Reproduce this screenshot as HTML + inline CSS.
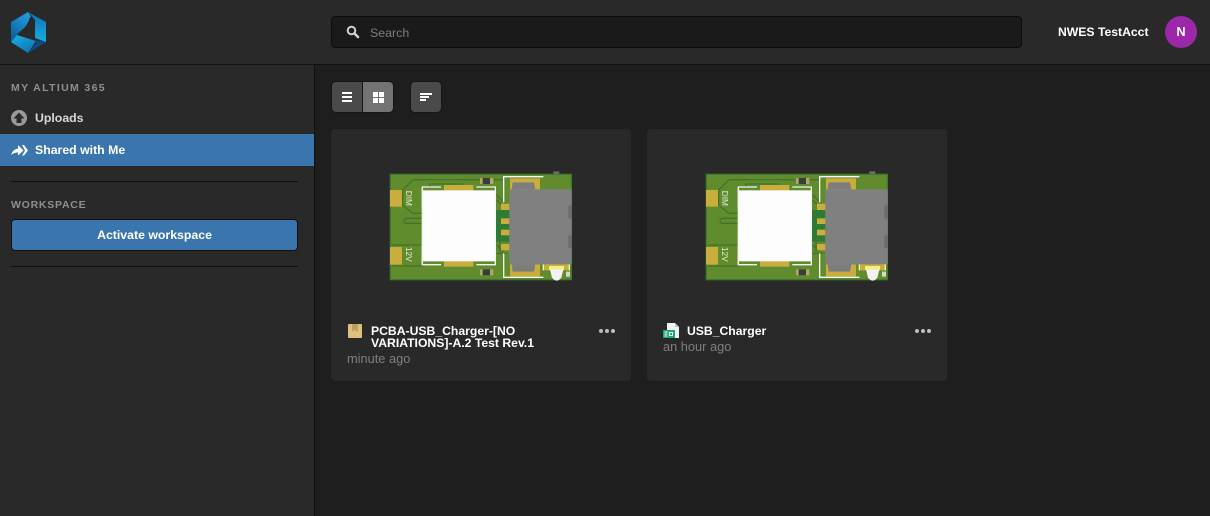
<!DOCTYPE html>
<html><head><meta charset="utf-8"><style>
*{box-sizing:border-box}
html,body{margin:0;padding:0;width:1210px;height:516px;overflow:hidden;background:#1e1e1e;font-family:"Liberation Sans",sans-serif}
.a{position:absolute;white-space:nowrap}
.hdr{left:0;top:0;width:1210px;height:65px;background:#292929;border-bottom:1px solid #111}
.side{left:0;top:65px;width:315px;height:451px;background:#292929;border-right:1px solid #111}
.cap{font-size:10.5px;font-weight:bold;color:#8f8f8f}
.nav{font-size:12.3px;font-weight:bold;line-height:16px}
.card{background:#292929;border-radius:4px;width:300px;height:252px;top:129px}
.t{font-size:12.2px;font-weight:bold;color:#fff;line-height:12px}
.s{font-size:12.8px;color:#7f7f7f;line-height:16px}
.btn{background:#4a4a4a;border:1px solid #151515;height:32px;top:81px}
</style></head><body>
<div class="a hdr"></div><div class="a side"></div>

<svg class="a" style="left:5px;top:7px" width="48" height="50" viewBox="0 0 48 50">
<defs>
<linearGradient id="g1" x1="0.7" y1="0" x2="0.2" y2="1"><stop offset="0" stop-color="#1f9ee0"/><stop offset="1" stop-color="#0c5a9a"/></linearGradient>
<linearGradient id="g2" x1="0" y1="0" x2="0" y2="1"><stop offset="0" stop-color="#0f6fb5"/><stop offset="1" stop-color="#18aee0"/></linearGradient>
<linearGradient id="g3" x1="0" y1="0" x2="1" y2="1"><stop offset="0" stop-color="#18b4e4"/><stop offset="1" stop-color="#0d6cae"/></linearGradient>
</defs>
<path d="M23 5L6 15V35L12 28L21 19L26 10Z" fill="url(#g1)"/>
<path d="M23 5L41 15V35L30 31V13Z" fill="url(#g2)"/>
<path d="M6 35L12 28L31 34L23 46Z" fill="url(#g3)"/>
<path d="M30 32L41 35L23 46L31 36Z" fill="#0b4c86"/>
<path d="M25 10L30 13V32L38 34.500L30 33.500L12 27L22 19Z" fill="#292929"/>
</svg>

<div class="a" style="left:331px;top:16px;width:691px;height:32px;background:#1a1a1a;border:1px solid #0c0c0c;border-radius:4px"></div>
<svg class="a" style="left:346px;top:25px" width="14" height="14" viewBox="0 0 14 14"><circle cx="5.500" cy="5.500" r="3.800" fill="none" stroke="#d0d0d0" stroke-width="2"/><path d="M8.500 8.500l3.500 3.500" stroke="#d0d0d0" stroke-width="2.600" stroke-linecap="round"/></svg>
<div class="a" style="left:370px;top:25px;font-size:12.4px;line-height:16px;color:#7d7d7d">Search</div>

<div class="a" style="left:1058px;top:24px;font-size:12.2px;font-weight:bold;line-height:16px;color:#fff">NWES TestAcct</div>
<div class="a" style="left:1165px;top:16px;width:32px;height:32px;border-radius:50%;background:#9c27a8;color:#fff;font-size:12.5px;font-weight:bold;line-height:32px;text-align:center">N</div>

<div class="a cap" style="left:11px;top:81px;line-height:14px;letter-spacing:1.35px">MY ALTIUM 365</div>
<svg class="a" style="left:11px;top:110px" width="16" height="16" viewBox="0 0 16 16"><circle cx="8" cy="8" r="8" fill="#9a9a9a"/><path d="M8 2.500L13.500 8.500H10.500V13H5.500V8.500H2.500Z" fill="#292929"/></svg>
<div class="a nav" style="left:35px;top:110px;color:#d8d8d8">Uploads</div>
<div class="a" style="left:0;top:134px;width:314px;height:32px;background:#3b75ae"></div>
<svg class="a" style="left:11px;top:143px" width="17" height="14" viewBox="0 0 17 14"><path d="M0 12Q2 6 7 5.500V2L12.500 7.500L7 12.500V9.500Q3 9.500 0 12Z" fill="#fff"/><path d="M11 2H13L17 7.500L13 12.500H11L14 7.500Z" fill="#fff"/></svg>
<div class="a nav" style="left:35px;top:142px;color:#fff">Shared with Me</div>

<div class="a" style="left:11px;top:181px;width:287px;height:1px;background:#0f0f0f"></div>
<div class="a cap" style="left:11px;top:198px;line-height:14px;letter-spacing:.75px">WORKSPACE</div>
<div class="a" style="left:11px;top:219px;width:287px;height:32px;background:#3b75ae;border:1px solid #111;border-radius:4px;color:#fff;font-size:12.3px;font-weight:bold;line-height:30px;text-align:center">Activate workspace</div>
<div class="a" style="left:11px;top:266px;width:287px;height:1px;background:#0f0f0f"></div>

<div class="a btn" style="left:331px;width:32px;border-radius:5px 0 0 5px"></div>
<div class="a btn" style="left:362px;width:32px;background:#737373;border-radius:0 5px 5px 0"></div>
<div class="a" style="left:342px;top:92px;width:10px;height:2px;background:#fff;box-shadow:0 4px #fff,0 8px #fff"></div>
<div class="a" style="left:373px;top:92px;width:5px;height:5px;background:#fff;box-shadow:6px 0 #fff,0 6px #fff,6px 6px #fff"></div>
<div class="a btn" style="left:410px;width:32px;border-radius:5px"></div>
<div class="a" style="left:420px;top:93px;width:12px;height:2px;background:#fff"></div>
<div class="a" style="left:420px;top:96px;width:9px;height:2px;background:#fff"></div>
<div class="a" style="left:420px;top:99px;width:6px;height:2px;background:#fff"></div>

<div class="a card" style="left:331px"></div>
<div class="a card" style="left:647px"></div>

<svg class="a" style="left:380px;top:165px" width="200" height="125" viewBox="0 0 600 375">
<rect x="30" y="27" width="545" height="318" fill="#618c2e"/>
<rect x="31" y="28" width="543" height="316" fill="none" stroke="#41782c" stroke-width="4"/>
<path d="M100 44H370M68 75l32-31M68 75v45l30 25h30M125 160H80a7 7 0 0 0 0 15H125M35 240h90M35 303h95M150 66v-9h100M350 240l20 20M350 265h30M350 105l35 35M350 90l35 35M360 170v90" fill="none" stroke="#3f752b" stroke-width="4"/>
<rect x="30" y="75" width="36" height="50" fill="#c9ae3d"/><rect x="30" y="246" width="36" height="53" fill="#c9ae3d"/>
<rect x="192" y="60" width="88" height="18" fill="#c9ae3d"/><rect x="192" y="287" width="88" height="18" fill="#c9ae3d"/>
<rect x="348" y="135" width="40" height="95" fill="#2f7a35"/>
<rect x="363" y="116" width="25" height="19" fill="#c9ae3d"/><rect x="363" y="160" width="25" height="17" fill="#c9ae3d"/><rect x="363" y="194" width="25" height="17" fill="#c9ae3d"/><rect x="363" y="237" width="25" height="19" fill="#c9ae3d"/>
<rect x="390" y="40" width="90" height="35" fill="#c9ae3d"/><rect x="390" y="298" width="90" height="36" fill="#c9ae3d"/>
<path d="M395 73L398 52H462L466 73Z" fill="#7d7d7d"/><path d="M395 298L398 320H462L466 298Z" fill="#7d7d7d"/>
<rect x="388" y="73" width="187" height="225" fill="#808080"/>
<rect x="565" y="122" width="10" height="38" fill="#6c6c6c"/><rect x="565" y="211" width="10" height="38" fill="#6c6c6c"/>
<rect x="129" y="76" width="216" height="213" fill="#fdfdfd"/>
<path d="M127 125V66H183M289 66H346V299H289M183 299H127V240" fill="none" stroke="#f4f4f4" stroke-width="4"/>
<path d="M127 68V299" stroke="#f4f4f4" stroke-width="4"/>
<path d="M490 35H371V112M371 265V337H490" fill="none" stroke="#f7f7f7" stroke-width="4"/>
<rect x="300" y="39" width="40" height="18" fill="#b5a566"/><rect x="308" y="39" width="22" height="18" fill="#35403a"/>
<rect x="300" y="313" width="40" height="18" fill="#b5a566"/><rect x="308" y="313" width="22" height="18" fill="#35403a"/>
<rect x="490" y="298" width="78" height="18" fill="#c9ae3d"/>
<path d="M490 316V298M568 316V298" stroke="#f3efc0" stroke-width="4"/>
<rect x="507" y="303" width="45" height="12" fill="#f5ee8a"/>
<path d="M510 314H550L544 338Q530 356 516 338Z" fill="#f2f2f2"/>
<rect x="558" y="320" width="12" height="15" fill="#eee" opacity=".8"/>
<text x="84" y="268" font-family="Liberation Sans" font-size="25" fill="#e4ebd0" transform="rotate(90 84 268)" text-anchor="middle" dominant-baseline="middle">12V</text>
<text x="84" y="100" font-family="Liberation Sans" font-size="25" fill="#e4ebd0" transform="rotate(90 84 100)" text-anchor="middle" dominant-baseline="middle">DIM</text>
<rect x="520" y="19" width="18" height="8" fill="#888" opacity=".7"/>
</svg>

<svg class="a" style="left:696px;top:165px" width="200" height="125" viewBox="0 0 600 375">
<rect x="30" y="27" width="545" height="318" fill="#618c2e"/>
<rect x="31" y="28" width="543" height="316" fill="none" stroke="#41782c" stroke-width="4"/>
<path d="M100 44H370M68 75l32-31M68 75v45l30 25h30M125 160H80a7 7 0 0 0 0 15H125M35 240h90M35 303h95M150 66v-9h100M350 240l20 20M350 265h30M350 105l35 35M350 90l35 35M360 170v90" fill="none" stroke="#3f752b" stroke-width="4"/>
<rect x="30" y="75" width="36" height="50" fill="#c9ae3d"/><rect x="30" y="246" width="36" height="53" fill="#c9ae3d"/>
<rect x="192" y="60" width="88" height="18" fill="#c9ae3d"/><rect x="192" y="287" width="88" height="18" fill="#c9ae3d"/>
<rect x="348" y="135" width="40" height="95" fill="#2f7a35"/>
<rect x="363" y="116" width="25" height="19" fill="#c9ae3d"/><rect x="363" y="160" width="25" height="17" fill="#c9ae3d"/><rect x="363" y="194" width="25" height="17" fill="#c9ae3d"/><rect x="363" y="237" width="25" height="19" fill="#c9ae3d"/>
<rect x="390" y="40" width="90" height="35" fill="#c9ae3d"/><rect x="390" y="298" width="90" height="36" fill="#c9ae3d"/>
<path d="M395 73L398 52H462L466 73Z" fill="#7d7d7d"/><path d="M395 298L398 320H462L466 298Z" fill="#7d7d7d"/>
<rect x="388" y="73" width="187" height="225" fill="#808080"/>
<rect x="565" y="122" width="10" height="38" fill="#6c6c6c"/><rect x="565" y="211" width="10" height="38" fill="#6c6c6c"/>
<rect x="129" y="76" width="216" height="213" fill="#fdfdfd"/>
<path d="M127 125V66H183M289 66H346V299H289M183 299H127V240" fill="none" stroke="#f4f4f4" stroke-width="4"/>
<path d="M127 68V299" stroke="#f4f4f4" stroke-width="4"/>
<path d="M490 35H371V112M371 265V337H490" fill="none" stroke="#f7f7f7" stroke-width="4"/>
<rect x="300" y="39" width="40" height="18" fill="#b5a566"/><rect x="308" y="39" width="22" height="18" fill="#35403a"/>
<rect x="300" y="313" width="40" height="18" fill="#b5a566"/><rect x="308" y="313" width="22" height="18" fill="#35403a"/>
<rect x="490" y="298" width="78" height="18" fill="#c9ae3d"/>
<path d="M490 316V298M568 316V298" stroke="#f3efc0" stroke-width="4"/>
<rect x="507" y="303" width="45" height="12" fill="#f5ee8a"/>
<path d="M510 314H550L544 338Q530 356 516 338Z" fill="#f2f2f2"/>
<rect x="558" y="320" width="12" height="15" fill="#eee" opacity=".8"/>
<text x="84" y="268" font-family="Liberation Sans" font-size="25" fill="#e4ebd0" transform="rotate(90 84 268)" text-anchor="middle" dominant-baseline="middle">12V</text>
<text x="84" y="100" font-family="Liberation Sans" font-size="25" fill="#e4ebd0" transform="rotate(90 84 100)" text-anchor="middle" dominant-baseline="middle">DIM</text>
<rect x="520" y="19" width="18" height="8" fill="#888" opacity=".7"/>
</svg>

<svg class="a" style="left:348px;top:324px" width="14" height="14" viewBox="0 0 14 14"><rect width="14" height="14" rx="1" fill="#dfc07f"/><path d="M4 0H10V8L7 6 4 8Z" fill="#bda063"/></svg>
<div class="a t" style="left:371px;top:325px">PCBA-USB_Charger-[NO<br>VARIATIONS]-A.2 Test Rev.1</div>
<div class="a s" style="left:347px;top:351px">minute ago</div>
<div class="a" style="left:599px;top:329px;width:4px;height:4px;border-radius:50%;background:#bdbdbd;box-shadow:6px 0 #bdbdbd,12px 0 #bdbdbd"></div>

<svg class="a" style="left:663px;top:323px" width="17" height="16" viewBox="0 0 17 16"><path d="M4 0H12L16 4V15H4Z" fill="#eef3f5"/><path d="M12 0L16 4H12Z" fill="#b9c8cf"/><rect x="0" y="7" width="12" height="8" fill="#22a578"/><path d="M1.500 9h3M1.500 11h3M1.500 13h3" stroke="#dff" stroke-width="1"/><rect x="6.500" y="9.500" width="3" height="3" fill="none" stroke="#dff" stroke-width="1"/></svg>
<div class="a t" style="left:687px;top:325px">USB_Charger</div>
<div class="a s" style="left:663px;top:339px">an hour ago</div>
<div class="a" style="left:915px;top:329px;width:4px;height:4px;border-radius:50%;background:#bdbdbd;box-shadow:6px 0 #bdbdbd,12px 0 #bdbdbd"></div>
</body></html>
